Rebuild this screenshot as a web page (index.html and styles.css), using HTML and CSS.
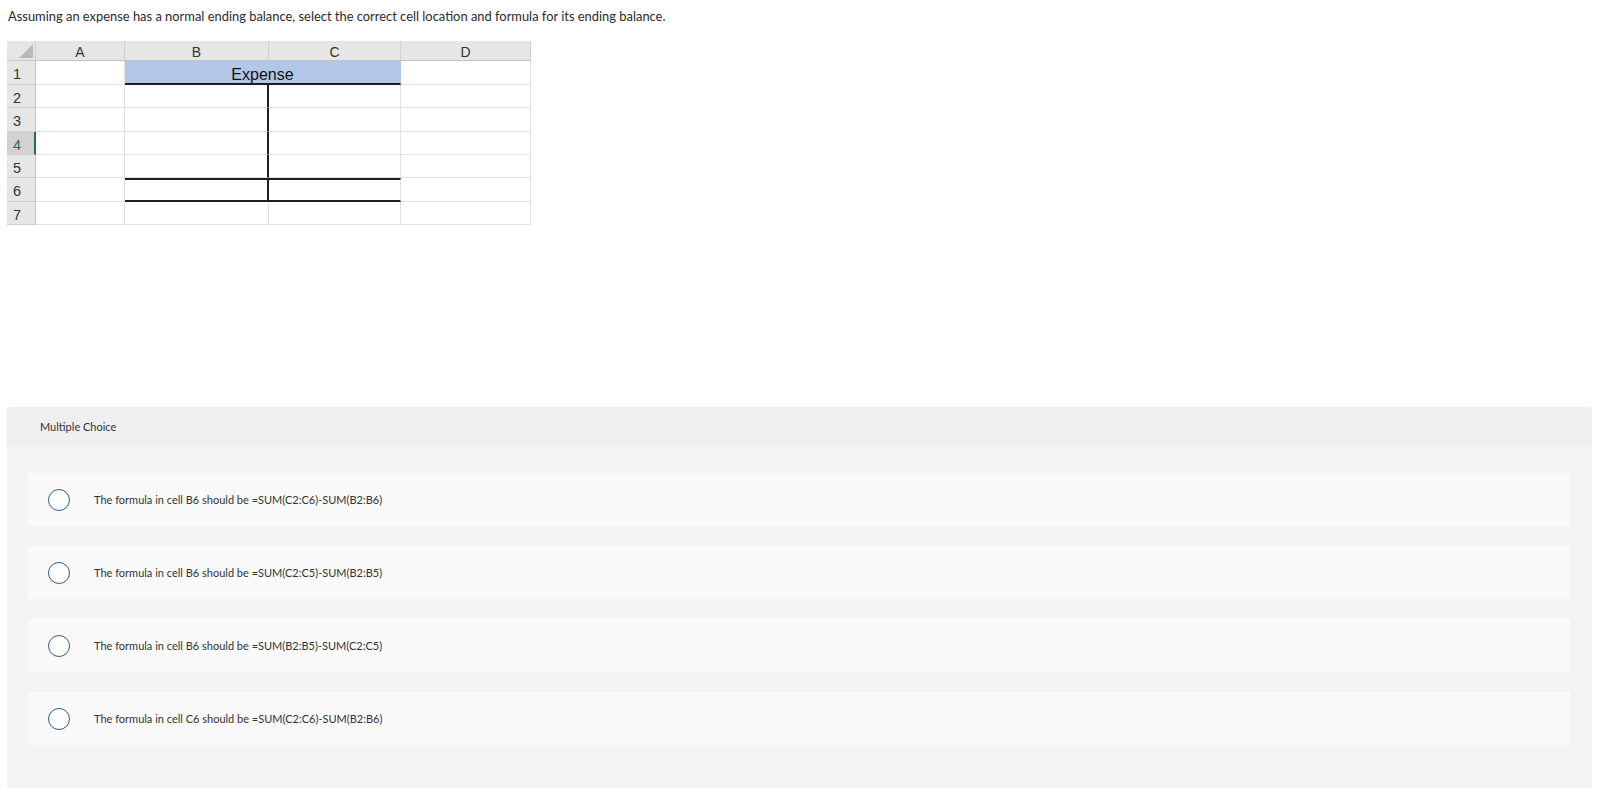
FILE: index.html
```html
<!DOCTYPE html>
<html>
<head>
<meta charset="utf-8">
<link rel="stylesheet" href="styles.css">
</head>
<body>
<p class="question">Assuming an expense has a normal ending balance, select the correct cell location and formula for its ending balance.</p>

<div class="sheet">
  <div class="corner"><svg width="29" height="20" viewBox="0 0 29 20"><polygon points="26,3 26,17 12,17" fill="#b9b9b9"/></svg></div>
  <div class="colhead">A</div>
  <div class="colhead">B</div>
  <div class="colhead">C</div>
  <div class="colhead">D</div>

  <div class="rowhead">1</div>
  <div class="cell"></div>
  <div class="cell title-cell">Expense</div>
  <div class="cell"></div>

  <div class="rowhead">2</div>
  <div class="cell"></div>
  <div class="cell vr"></div>
  <div class="cell"></div>
  <div class="cell"></div>

  <div class="rowhead">3</div>
  <div class="cell"></div>
  <div class="cell vr"></div>
  <div class="cell"></div>
  <div class="cell"></div>

  <div class="rowhead active">4</div>
  <div class="cell"></div>
  <div class="cell vr"></div>
  <div class="cell"></div>
  <div class="cell"></div>

  <div class="rowhead">5</div>
  <div class="cell"></div>
  <div class="cell vr"></div>
  <div class="cell"></div>
  <div class="cell"></div>

  <div class="rowhead">6</div>
  <div class="cell"></div>
  <div class="cell vr top-rule bottom-rule"></div>
  <div class="cell top-rule bottom-rule"></div>
  <div class="cell"></div>

  <div class="rowhead">7</div>
  <div class="cell"></div>
  <div class="cell"></div>
  <div class="cell"></div>
  <div class="cell"></div>
</div>

<section class="mc">
  <div class="mc-head">Multiple Choice</div>
  <div class="mc-body">
    <div class="option"><span class="radio"></span><span class="opt-text">The formula in cell B6 should be =SUM(C2:C6)-SUM(B2:B6)</span></div>
    <div class="option"><span class="radio"></span><span class="opt-text">The formula in cell B6 should be =SUM(C2:C5)-SUM(B2:B5)</span></div>
    <div class="option"><span class="radio"></span><span class="opt-text">The formula in cell B6 should be =SUM(B2:B5)-SUM(C2:C5)</span></div>
    <div class="option"><span class="radio"></span><span class="opt-text">The formula in cell C6 should be =SUM(C2:C6)-SUM(B2:B6)</span></div>
  </div>
</section>
</body>
</html>
```

FILE: styles.css
```css
html, body {
  margin: 0;
  padding: 0;
  background: #ffffff;
}

body {
  font-family: Lato, "Open Sans", "Liberation Sans", sans-serif;
  color: #333333;
}

.question {
  margin: 0;
  padding: 9px 0 0 8px;
  height: 32px;
  box-sizing: border-box;
  font-size: 12.9px;
  line-height: 14px;
  color: #2b2b2b;
}

.sheet {
  margin: 9px 0 0 7px;
  display: grid;
  grid-template-columns: 29px 89px 144px 132px 130px;
  grid-template-rows: 20px 24px 23px 24px 23px 23px 24px 23px;
  width: 524px;
  font-family: "Liberation Sans", Arial, sans-serif;
}

.corner {
  background: #e6e6e6;
  border-right: 1px solid #d0d0d0;
  border-bottom: 1px solid #c8c8c8;
  box-sizing: border-box;
}

.corner svg {
  display: block;
}

.colhead {
  background: #e6e6e6;
  border-right: 1px solid #d0d0d0;
  border-bottom: 1px solid #c2c2c2;
  box-sizing: border-box;
  text-align: center;
  font-size: 14px;
  line-height: 19px;
  padding-top: 2px;
  color: #333333;
}

.rowhead {
  background: #e6e6e6;
  border-bottom: 1px solid #d0d0d0;
  border-right: 1px solid #c2c2c2;
  box-sizing: border-box;
  font-size: 14.5px;
  line-height: 22px;
  padding-top: 2px;
  padding-left: 6px;
  color: #333333;
}

.rowhead.active {
  background: #d2d2d2;
  color: #217346;
  border-right: 2px solid #217346;
}

.cell {
  border-right: 1px solid #e1e1e1;
  border-bottom: 1px solid #e1e1e1;
  box-sizing: border-box;
  background: #ffffff;
}

.title-cell {
  grid-column: span 2;
  background: #b4c6e7;
  border-bottom: 2px solid #1f1f1f;
  border-right: 1px solid #b4c6e7;
  text-align: center;
  font-size: 16px;
  line-height: 24px;
  padding-top: 2px;
  color: #111111;
}

.vr {
  border-right: 2px solid #1f1f1f;
}

.top-rule {
  border-top: 2px solid #1f1f1f;
}

.bottom-rule {
  border-bottom: 2px solid #1f1f1f;
}

.mc {
  margin: 182px 11px 0 7px;
  border-radius: 2px;
  overflow: hidden;
}

.mc-head {
  background: #efefef;
  height: 40px;
  padding-left: 33px;
  font-size: 11px;
  line-height: 40px;
  color: #333333;
}

.mc-body {
  background: #f4f4f4;
  padding: 26px 22px 43px 21px;
  display: flex;
  flex-direction: column;
  gap: 20px;
}

.option {
  background: #fafafa;
  height: 53px;
  border-radius: 2px;
  display: flex;
  align-items: center;
  padding-left: 20px;
}

.radio {
  width: 20px;
  height: 20px;
  border: 1.5px solid #2e5d8e;
  border-radius: 50%;
  background: #ffffff;
  flex: none;
}

.opt-text {
  margin-left: 24px;
  font-size: 11px;
  color: #333333;
}
```
